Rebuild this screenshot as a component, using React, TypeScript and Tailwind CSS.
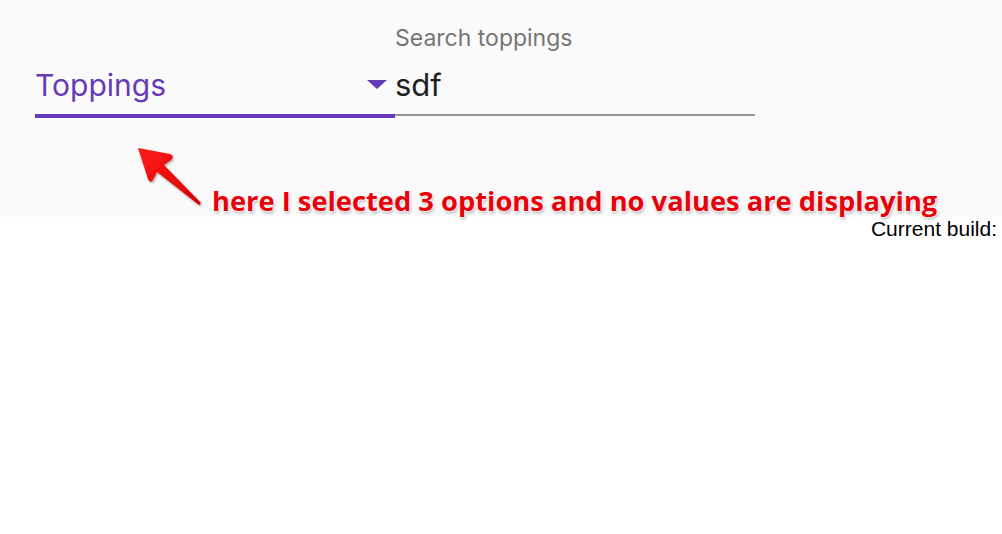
import React from "react";

// Material-style select + autocomplete input, with a screenshot annotation on top

export default function App() {
  return (
    <div className="relative w-[1002px] h-[534px] bg-white overflow-hidden">
      {/* Form panel */}
      <div className="h-[217px] bg-[#fafafa] pl-[35px] pt-[24px] font-['Inter',sans-serif]">
        <div className="flex items-start">
          {/* Select */}
          <div className="w-[360px] pt-[28px]">
            <div className="flex items-start justify-between h-[66px] pt-[14px] pr-[8px] border-b-[4px] border-[#673ab7]">
              <span className="text-[30px] leading-[38px] text-[#673ab7]">Toppings</span>
              <span className="mt-[14px] w-0 h-0 border-x-[10px] border-x-transparent border-t-[9px] border-t-[#673ab7]" />
            </div>
          </div>
          {/* Input */}
          <div className="w-[360px]">
            <div className="pt-[1px] text-[23px] leading-[27px] text-[#757575]">Search toppings</div>
            <div className="h-[64px] pt-[14px] border-b-2 border-[#949494]">
              <span className="text-[31px] leading-[38px] text-[#1f1f1f]">sdf</span>
            </div>
          </div>
        </div>
      </div>

      <div className="flex justify-end pr-[5px]">
        <span className="font-['Liberation_Sans',Arial,sans-serif] text-[21px] leading-[24px] text-black">
          Current build:
        </span>
      </div>

      {/* Annotation arrow */}
      <svg
        className="absolute left-0 top-0 pointer-events-none"
        width="260"
        height="230"
        viewBox="0 0 260 230"
      >
        <defs>
          <linearGradient id="ar" x1="0" y1="0" x2="1" y2="1">
            <stop offset="0" stopColor="#ff1a1a" />
            <stop offset="1" stopColor="#d40000" />
          </linearGradient>
          <filter id="sh" x="-20%" y="-20%" width="140%" height="140%">
            <feDropShadow dx="1" dy="1.5" stdDeviation="1" floodColor="#000" floodOpacity="0.35" />
          </filter>
        </defs>
        <path
          d="M138 148 L170 154 Q175 156 171 160 L164 165 L201 203 L199 205 L157 172 L153 180 Q150 184 148 179 Z"
          fill="url(#ar)"
          filter="url(#sh)"
        />
      </svg>

      {/* Annotation text */}
      <div className="absolute left-[212px] top-[184px] font-['Open_Sans',sans-serif] font-bold text-[27.3px] leading-[34px] text-[#e8000b] whitespace-nowrap [text-shadow:0_0_2px_#fff,0_0_2px_#fff,0_0_2px_#fff,0_0_3px_#fff,1px_2px_3px_rgba(0,0,0,0.35)]">
        here I selected 3 options and no values are displaying
      </div>
    </div>
  );
}
